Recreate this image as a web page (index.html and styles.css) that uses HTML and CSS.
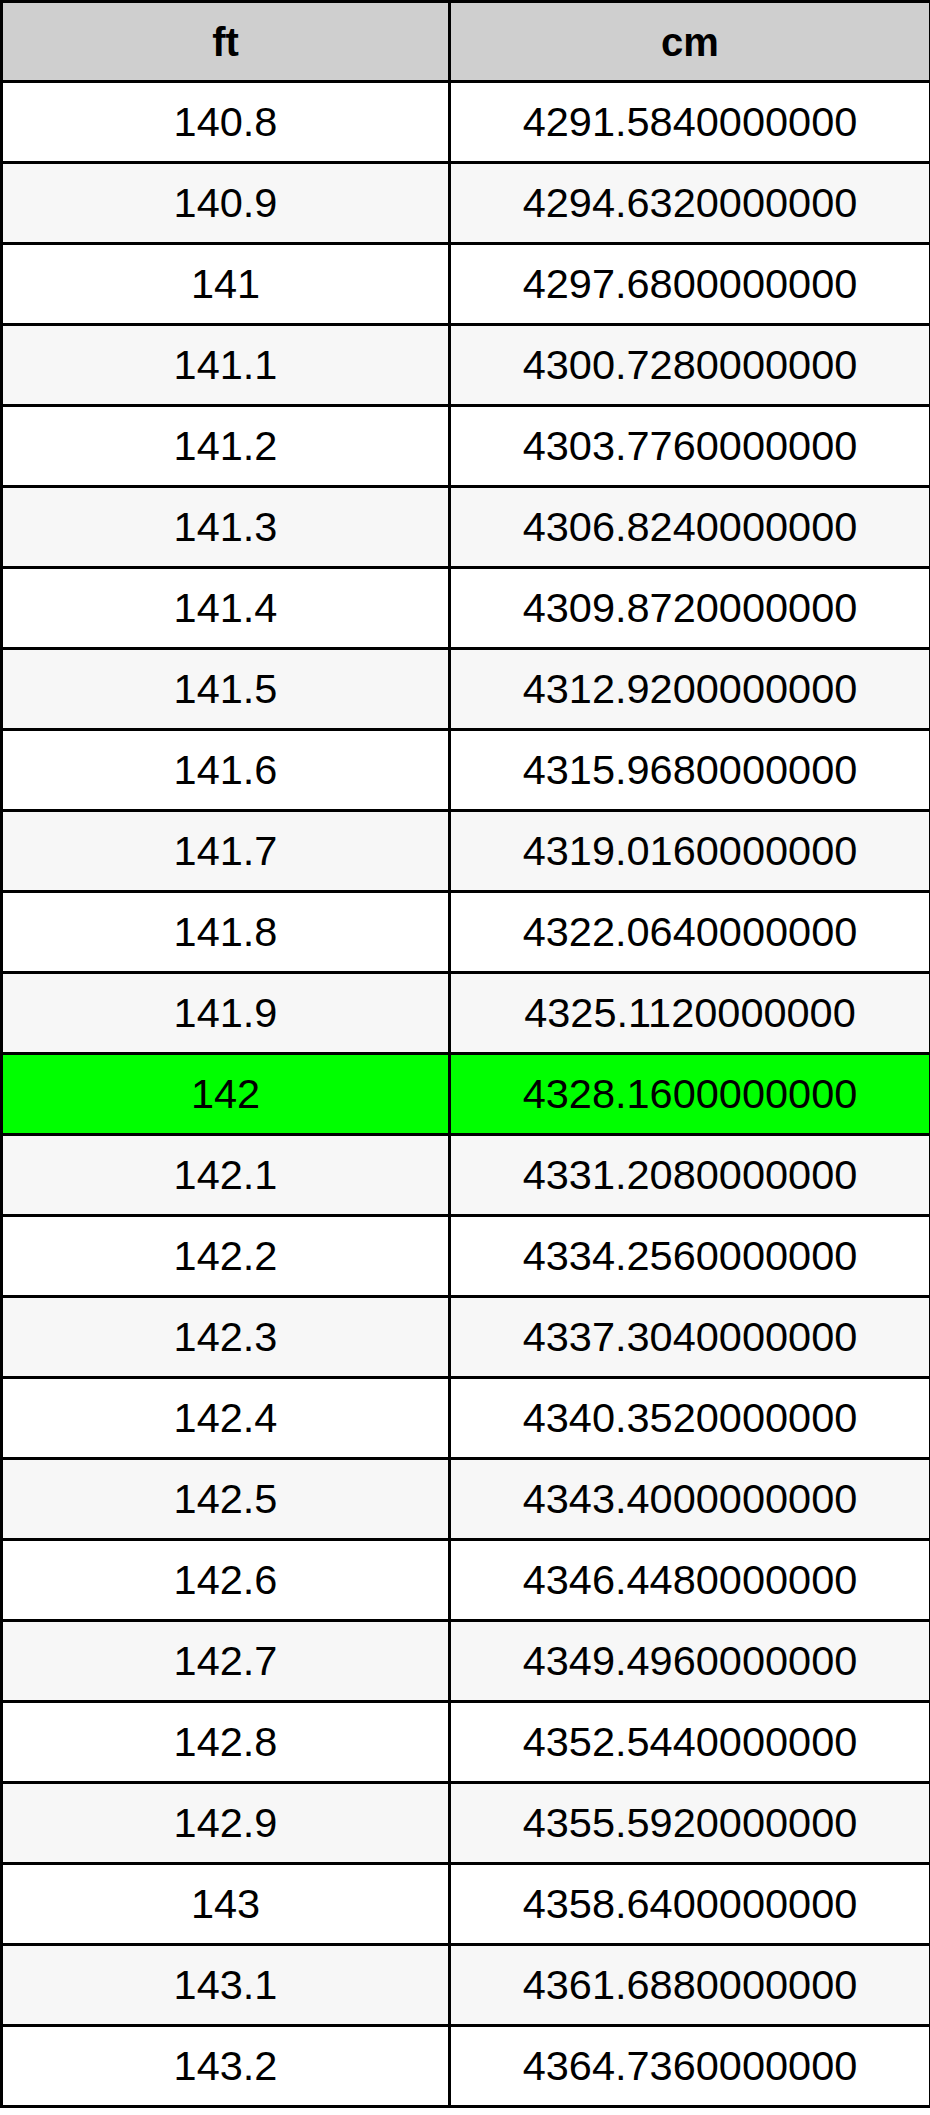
FILE: index.html
```html
<!DOCTYPE html>
<html>
<head>
<meta charset="utf-8">
<link rel="stylesheet" href="styles.css">
</head>
<body>
<table class="conv">
<colgroup><col class="c-ft"><col class="c-cm"></colgroup>
<thead>
<tr><th>ft</th><th>cm</th></tr>
</thead>
<tbody>
<tr><td>140.8</td><td>4291.5840000000</td></tr>
<tr class="alt"><td>140.9</td><td>4294.6320000000</td></tr>
<tr><td>141</td><td>4297.6800000000</td></tr>
<tr class="alt"><td>141.1</td><td>4300.7280000000</td></tr>
<tr><td>141.2</td><td>4303.7760000000</td></tr>
<tr class="alt"><td>141.3</td><td>4306.8240000000</td></tr>
<tr><td>141.4</td><td>4309.8720000000</td></tr>
<tr class="alt"><td>141.5</td><td>4312.9200000000</td></tr>
<tr><td>141.6</td><td>4315.9680000000</td></tr>
<tr class="alt"><td>141.7</td><td>4319.0160000000</td></tr>
<tr><td>141.8</td><td>4322.0640000000</td></tr>
<tr class="alt"><td>141.9</td><td>4325.1120000000</td></tr>
<tr class="hl"><td>142</td><td>4328.1600000000</td></tr>
<tr class="alt"><td>142.1</td><td>4331.2080000000</td></tr>
<tr><td>142.2</td><td>4334.2560000000</td></tr>
<tr class="alt"><td>142.3</td><td>4337.3040000000</td></tr>
<tr><td>142.4</td><td>4340.3520000000</td></tr>
<tr class="alt"><td>142.5</td><td>4343.4000000000</td></tr>
<tr><td>142.6</td><td>4346.4480000000</td></tr>
<tr class="alt"><td>142.7</td><td>4349.4960000000</td></tr>
<tr><td>142.8</td><td>4352.5440000000</td></tr>
<tr class="alt"><td>142.9</td><td>4355.5920000000</td></tr>
<tr><td>143</td><td>4358.6400000000</td></tr>
<tr class="alt"><td>143.1</td><td>4361.6880000000</td></tr>
<tr><td>143.2</td><td>4364.7360000000</td></tr>
</tbody>
</table>
</body>
</html>
```

FILE: styles.css
```css
html, body {
  margin: 0;
  padding: 0;
  background: #ffffff;
}

.conv {
  border-collapse: collapse;
  table-layout: fixed;
  width: 929px;
  font-family: "Liberation Sans", Arial, sans-serif;
  font-size: 41.5px;
  color: #000;
  border: 3px solid #000;
}

.c-ft {
  width: 448px;
}

.c-cm {
  width: 481px;
}

.conv th,
.conv td {
  border: 3px solid #000;
  padding: 0;
  text-align: center;
  vertical-align: middle;
  line-height: 1;
}

.conv th {
  background: #cfcfcf;
  font-weight: bold;
  font-size: 40px;
  height: 77px;
}

.conv td {
  background: #ffffff;
  height: 78px;
}

.conv tr.alt td {
  background: #f7f7f7;
}

.conv tr.hl td {
  background: #00ff00;
}
```
